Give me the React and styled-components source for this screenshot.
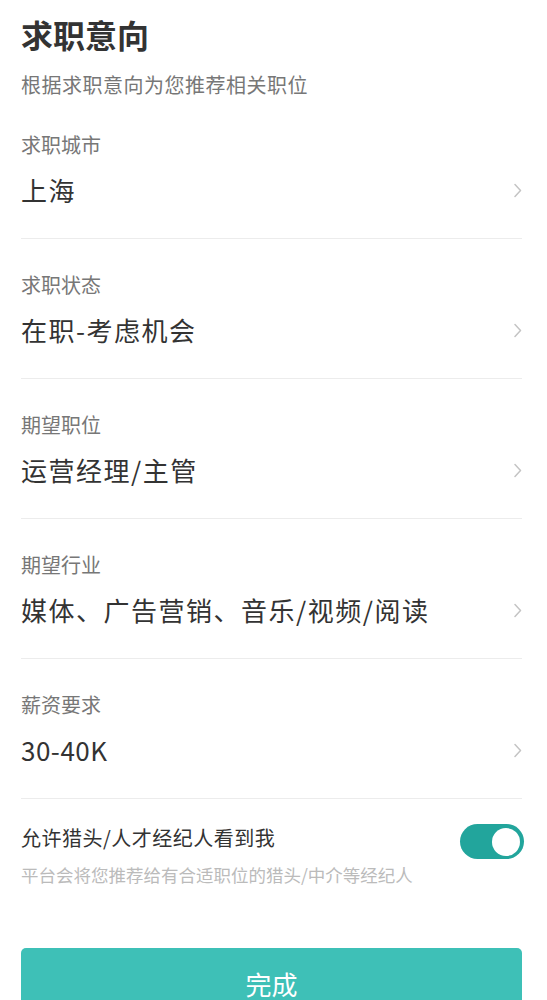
import styled, { createGlobalStyle } from "styled-components";

const GlobalStyle = createGlobalStyle`
    html, body {
        margin: 0;
        padding: 0;
        background: #ffffff;
    }
    body {
        font-family: "Noto Sans CJK SC", "Noto Sans", sans-serif;
        -webkit-font-smoothing: antialiased;
    }
`;

const Page = styled.div`
    width: 547px;
    height: 1000px;
    overflow: hidden;
    box-sizing: border-box;
    padding: 12px 25px 0 21px;
    display: flex;
    flex-direction: column;
`;

const Title = styled.h1`
    margin: 0;
    font-size: 32px;
    line-height: 44px;
    font-weight: 700;
    color: #333333;
`;

const Subtitle = styled.p`
    margin: 15px 0 0;
    font-size: 20px;
    line-height: 28px;
    letter-spacing: 0.5px;
    color: #777777;
`;

const Field = styled.div`
    padding: 32px 0 30px;
    border-bottom: 1px solid #ececec;
    cursor: pointer;
`;

const Label = styled.div`
    font-size: 20px;
    line-height: 28px;
    color: #777777;
`;

const ValueRow = styled.div`
    margin-top: 13px;
    display: flex;
    align-items: center;
    justify-content: space-between;
`;

const Value = styled.div`
    font-size: 26px;
    line-height: 36px;
    letter-spacing: ${({ $spacing }) => $spacing}px;
    color: #333333;
`;

const Chevron = () => (
    <svg width="8" height="15" viewBox="0 0 8 15" fill="none">
        <path d="M1 1.5L6.5 7.5L1 13.5" stroke="#c4c4c4" strokeWidth="1.5" strokeLinecap="round" strokeLinejoin="round" />
    </svg>
);

const ToggleRow = styled.div`
    padding-top: 25px;
    display: flex;
    justify-content: space-between;
    align-items: flex-start;
`;

const ToggleText = styled.div`
    display: flex;
    flex-direction: column;
`;

const ToggleTitle = styled.div`
    font-size: 20px;
    line-height: 28px;
    letter-spacing: 0.5px;
    color: #333333;
`;

const ToggleHint = styled.div`
    margin-top: 11px;
    font-size: 17.5px;
    line-height: 24px;
    color: #bbbbbb;
`;

const Switch = styled.div`
    width: 64px;
    height: 35px;
    margin-right: -2px;
    border-radius: 18px;
    background: ${({ $on }) => ($on ? "#22a59c" : "#dddddd")};
    display: flex;
    align-items: center;
    justify-content: ${({ $on }) => ($on ? "flex-end" : "flex-start")};
    padding: 0 4px;
    box-sizing: border-box;
`;

const Knob = styled.div`
    width: 28px;
    height: 28px;
    border-radius: 50%;
    background: #ffffff;
`;

const SubmitButton = styled.button`
    margin-top: 61px;
    width: 100%;
    height: 72px;
    flex-shrink: 0;
    border: none;
    border-radius: 5px;
    background: #3ec0b7;
    color: #ffffff;
    font-family: inherit;
    font-size: 26px;
    line-height: 36px;
    padding: 0;
`;

const fields = [
    { label: "求职城市", value: "上海", spacing: 1.5 },
    { label: "求职状态", value: "在职-考虑机会", spacing: 1.5 },
    { label: "期望职位", value: "运营经理/主管", spacing: 1.5 },
    { label: "期望行业", value: "媒体、广告营销、音乐/视频/阅读", spacing: 1.5 },
    { label: "薪资要求", value: "30-40K", spacing: 0.5 },
];

export default function App() {
    return (
        <>
            <GlobalStyle />
            <Page>
                <Title>求职意向</Title>
                <Subtitle>根据求职意向为您推荐相关职位</Subtitle>
                {fields.map((f) => (
                    <Field key={f.label}>
                        <Label>{f.label}</Label>
                        <ValueRow>
                            <Value $spacing={f.spacing}>{f.value}</Value>
                            <Chevron />
                        </ValueRow>
                    </Field>
                ))}
                <ToggleRow>
                    <ToggleText>
                        <ToggleTitle>允许猎头/人才经纪人看到我</ToggleTitle>
                        <ToggleHint>平台会将您推荐给有合适职位的猎头/中介等经纪人</ToggleHint>
                    </ToggleText>
                    <Switch $on>
                        <Knob />
                    </Switch>
                </ToggleRow>
                <SubmitButton>完成</SubmitButton>
            </Page>
        </>
    );
}
